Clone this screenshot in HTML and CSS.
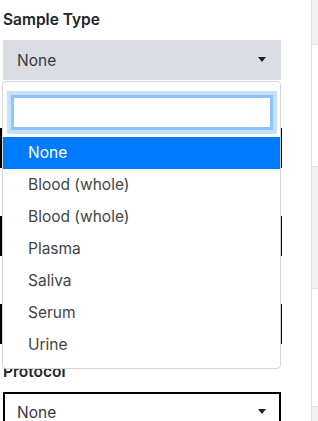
FILE: index.html
```html
<!DOCTYPE html>
<html>
<head>
<meta charset="utf-8">
<link rel="stylesheet" href="styles.css">
</head>
<body>
<div class="page">
  <div class="form">
    <div class="field">
      <div class="label">Sample Type</div>
      <div class="select select-open"><span class="value">None</span><i class="caret"></i></div>
    </div>
    <div class="field">
      <div class="label"></div>
      <div class="select select-under"></div>
    </div>
    <div class="field">
      <div class="label"></div>
      <div class="select select-under"></div>
    </div>
    <div class="field">
      <div class="label"></div>
      <div class="select select-under"></div>
    </div>
    <div class="field">
      <div class="label">Protocol</div>
      <div class="select select-dark"><span class="value">None</span><i class="caret"></i></div>
    </div>

    <div class="dropdown">
      <input class="search" type="text">
      <ul class="options">
        <li class="option active">None</li>
        <li class="option">Blood (whole)</li>
        <li class="option">Blood (whole)</li>
        <li class="option">Plasma</li>
        <li class="option">Saliva</li>
        <li class="option">Serum</li>
        <li class="option">Urine</li>
      </ul>
    </div>
  </div>
  <div class="gutter"></div>
  <div class="side">
    <div class="side-row gray r1"></div>
    <div class="side-row r2"></div>
    <div class="side-row gray r3"></div>
    <div class="side-row r4"></div>
    <div class="side-row gray r5"></div>
  </div>
</div>
</body>
</html>
```

FILE: styles.css
```css
html, body {
  margin: 0;
  padding: 0;
  background: #ffffff;
  font-family: Inter, "Noto Sans", sans-serif;
  overflow: hidden;
}

.page {
  display: flex;
  height: 421px;
  overflow: hidden;
}

.form {
  position: relative;
  width: 282px;
  padding-left: 3px;
  box-sizing: border-box;
  flex: none;
}

.field {
  height: 88px;
}

.label {
  height: 40px;
  box-sizing: border-box;
  padding-top: 10px;
  font-size: 15.5px;
  line-height: 20px;
  font-weight: 600;
  color: #212529;
}

.select {
  position: relative;
  height: 40px;
  width: 278px;
  box-sizing: border-box;
  display: flex;
  align-items: center;
  padding-left: 14px;
  font-size: 15.5px;
  color: #343a40;
}

.select-open {
  background: #dadee4;
}

.select-dark {
  border: 2px solid #000;
  background: #fff;
  padding-left: 12px;
}

.select-under {
  border: 2px solid #000;
  margin-left: -3px;
  width: 282px;
}

.caret {
  position: absolute;
  right: 15px;
  top: 17px;
  width: 0;
  height: 0;
  border-left: 4.5px solid transparent;
  border-right: 4.5px solid transparent;
  border-top: 5px solid #222;
}

.select-dark .caret {
  right: 13px;
  top: 15px;
}

.dropdown {
  position: absolute;
  left: 2px;
  top: 81px;
  width: 279px;
  height: 288px;
  box-sizing: border-box;
  border: 1px solid #d6d6d6;
  border-radius: 4px;
  background: #fff;
  padding-top: 13px;
}

.search {
  display: block;
  margin: 0 7px 0 8px;
  width: 262px;
  height: 35px;
  box-sizing: border-box;
  border: 3px solid #8fc3ff;
  box-shadow: 0 0 0 4px #c7e0ff;
  outline: none;
  padding: 0;
  background: #fff;
}

.options {
  list-style: none;
  margin: 7px 0 0 0;
  padding: 0;
}

.option {
  height: 32px;
  line-height: 32px;
  padding-left: 25px;
  font-size: 15.5px;
  color: #444444;
}

.option.active {
  background: #007bff;
  color: #ffffff;
}

.gutter {
  width: 29px;
  flex: none;
}

.side {
  flex: 1;
  border-left: 1px solid #dedede;
  display: flex;
  flex-direction: column;
}

.side-row {
  box-sizing: border-box;
  border-bottom: 1px solid #e2e2e2;
  flex: none;
}

.side-row.gray {
  background: #f1f1f1;
}

.r1 { height: 45px; }
.r2 { height: 122px; }
.r3 { height: 122px; }
.r4 { height: 118px; }
.r5 { height: 40px; }
```
